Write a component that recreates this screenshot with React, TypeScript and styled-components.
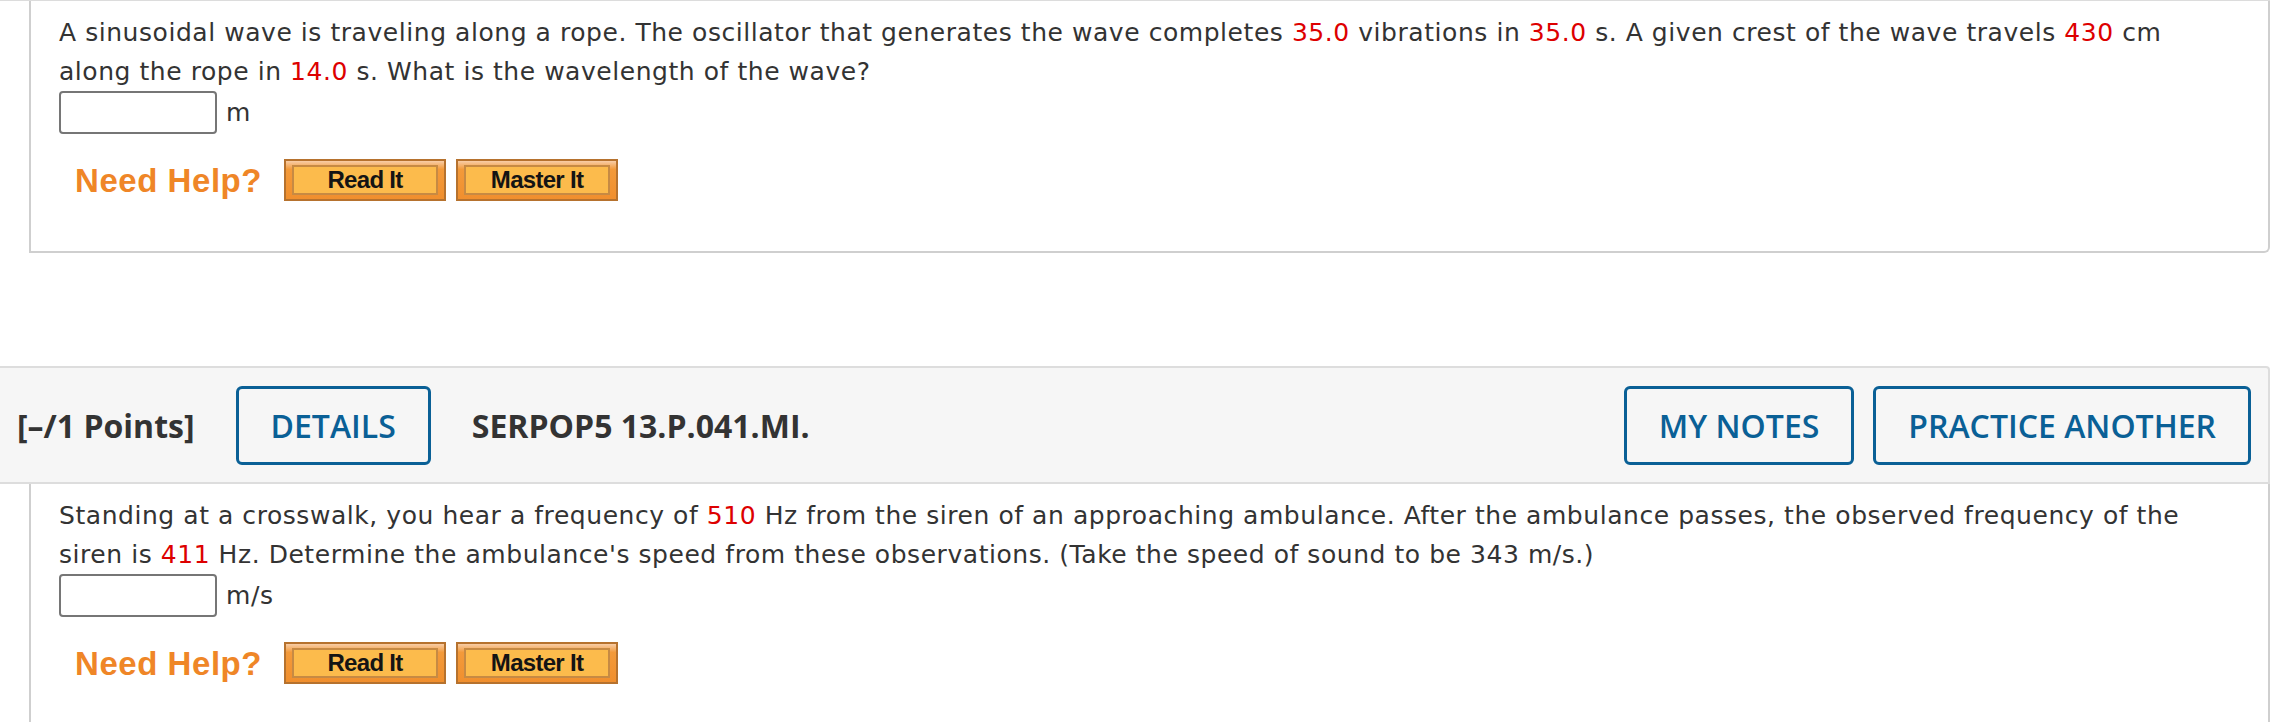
import React from 'react';
import styled, { createGlobalStyle } from 'styled-components';

const GlobalStyle = createGlobalStyle`
  html, body {
    margin: 0;
    padding: 0;
    background: #ffffff;
  }
  body {
    overflow: hidden;
  }
`;

const Page = styled.div`
  width: 2270px;
  border-top: 1px solid #dcdcdc;
`;

const QuestionHeader = styled.div`
  display: flex;
  align-items: center;
  gap: 41px;
  height: 114px;
  margin-top: 113px;
  padding: 0 17px;
  background: #f6f6f6;
  border: 2px solid #dddddd;
  border-left: none;
  border-top-right-radius: 4px;
  font-family: 'Open Sans', 'Liberation Sans', sans-serif;
`;

const HeaderLabel = styled.span`
  font-size: 32px;
  font-weight: 700;
  color: #333333;
  white-space: nowrap;
`;

const HeaderActions = styled.div`
  display: flex;
  gap: 19px;
  margin-left: auto;
`;

const OutlineButton = styled.button`
  height: 79px;
  padding: 0 32px;
  background: transparent;
  border: 3px solid #0a6096;
  border-radius: 6px;
  color: #0a6096;
  font-family: 'Open Sans', 'Liberation Sans', sans-serif;
  font-size: 32px;
  font-weight: 600;
  white-space: nowrap;
  cursor: pointer;
`;

const QuestionBody = styled.div<{ $last?: boolean }>`
  margin-left: 29px;
  padding: 12px 58px 50px 28px;
  border: 2px solid #cfcfcf;
  border-top: none;
  border-bottom-right-radius: 6px;
  font-family: 'DejaVu Sans', Verdana, sans-serif;
  font-size: 25px;
  line-height: 39px;
  letter-spacing: 0.55px;
  color: #333333;
  min-height: ${(p) => (p.$last ? '260px' : 'auto')};
`;

const Prompt = styled.p`
  margin: 0;
`;

const Value = styled.span`
  color: #dd0000;
`;

const AnswerRow = styled.div`
  display: flex;
  align-items: center;
  gap: 9px;
`;

const AnswerInput = styled.input`
  width: 158px;
  height: 43px;
  box-sizing: border-box;
  border: 2px solid #767676;
  border-radius: 4px;
  background: #ffffff;
`;

const HelpRow = styled.div`
  display: flex;
  align-items: center;
  margin-top: 25px;
  padding-left: 16px;
`;

const HelpLabel = styled.span`
  margin-right: 22px;
  font-family: 'Liberation Sans', Arial, sans-serif;
  font-size: 33px;
  font-weight: 700;
  color: #ef8627;
`;

const HelpButton = styled.button`
  display: flex;
  width: 162px;
  height: 42px;
  margin-right: 10px;
  padding: 4px 6px;
  box-sizing: border-box;
  border: 2px solid #b6722e;
  background: linear-gradient(#f8cda6 0%, #f39a3a 22%, #f08f2e 100%);
  cursor: pointer;
`;

const HelpButtonFace = styled.span`
  flex: 1;
  display: flex;
  align-items: center;
  justify-content: center;
  border: 2px solid #c78a43;
  background: #fcbb4c;
  font-family: 'Liberation Sans', Arial, sans-serif;
  font-size: 24px;
  font-weight: 700;
  color: #141414;
  letter-spacing: -0.7px;
`;

type Part = string | { v: string };

const Question: React.FC<{ parts: Part[]; unit: string; last?: boolean }> = ({ parts, unit, last }) => (
  <QuestionBody $last={last}>
    <Prompt>
      {parts.map((p, i) => (typeof p === 'string' ? <React.Fragment key={i}>{p}</React.Fragment> : <Value key={i}>{p.v}</Value>))}
    </Prompt>
    <AnswerRow>
      <AnswerInput type="text" />
      <span>{unit}</span>
    </AnswerRow>
    <HelpRow>
      <HelpLabel>Need Help?</HelpLabel>
      <HelpButton>
        <HelpButtonFace>Read It</HelpButtonFace>
      </HelpButton>
      <HelpButton>
        <HelpButtonFace>Master It</HelpButtonFace>
      </HelpButton>
    </HelpRow>
  </QuestionBody>
);

export default function App() {
  return (
    <Page>
      <GlobalStyle />
      <Question
        unit="m"
        parts={[
          'A sinusoidal wave is traveling along a rope. The oscillator that generates the wave completes ',
          { v: '35.0' },
          ' vibrations in ',
          { v: '35.0' },
          ' s. A given crest of the wave travels ',
          { v: '430' },
          ' cm along the rope in ',
          { v: '14.0' },
          ' s. What is the wavelength of the wave?',
        ]}
      />
      <QuestionHeader>
        <HeaderLabel>[–/1 Points]</HeaderLabel>
        <OutlineButton>DETAILS</OutlineButton>
        <HeaderLabel>SERPOP5 13.P.041.MI.</HeaderLabel>
        <HeaderActions>
          <OutlineButton>MY NOTES</OutlineButton>
          <OutlineButton>PRACTICE ANOTHER</OutlineButton>
        </HeaderActions>
      </QuestionHeader>
      <Question
        last
        unit="m/s"
        parts={[
          'Standing at a crosswalk, you hear a frequency of ',
          { v: '510' },
          ' Hz from the siren of an approaching ambulance. After the ambulance passes, the observed frequency of the siren is ',
          { v: '411' },
          " Hz. Determine the ambulance's speed from these observations. (Take the speed of sound to be 343 m/s.)",
        ]}
      />
    </Page>
  );
}
